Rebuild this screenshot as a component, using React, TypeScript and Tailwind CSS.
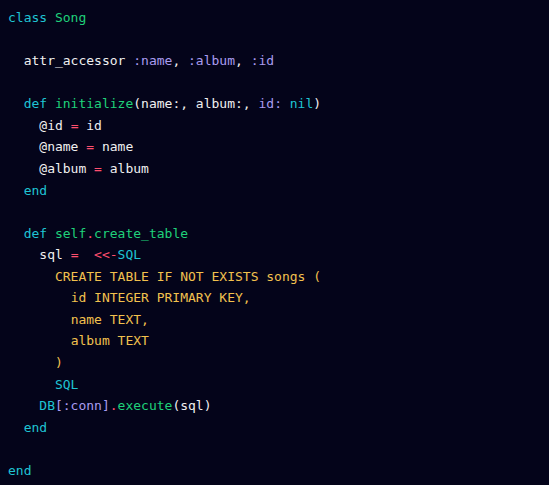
const K = "text-[#1fc4d4]"; // keywords
const N = "text-[#1fd17a]"; // names
const S = "text-[#a99cf0]"; // symbols
const O = "text-[#ff4f6e]"; // operators
const Q = "text-[#f2c14e]"; // sql string
const W = "text-[#f0f0f0]";

function C({ c, children }: { c: string; children: React.ReactNode }) {
  return <span className={c}>{children}</span>;
}

export default function App() {
  return (
    <div className="min-h-[485px] w-full bg-[#04041a]">
      <pre
        className={`m-0 px-2 pt-[7px] text-[13px] leading-[21.57px] ${W}`}
        style={{ fontFamily: '"DejaVu Sans Mono", monospace' }}
      >
        <C c={K}>class</C> <C c={N}>Song</C>
        {"\n\n  "}
        attr_accessor <C c={S}>:name</C>, <C c={S}>:album</C>, <C c={S}>:id</C>
        {"\n\n  "}
        <C c={K}>def</C> <C c={N}>initialize</C>(name:, album:, <C c={S}>id:</C> <C c={K}>nil</C>)
        {"\n    "}
        @id <C c={O}>=</C> id
        {"\n    "}
        @name <C c={O}>=</C> name
        {"\n    "}
        @album <C c={O}>=</C> album
        {"\n  "}
        <C c={K}>end</C>
        {"\n\n  "}
        <C c={K}>def</C> <C c={N}>self</C><C c={O}>.</C><C c={N}>create_table</C>
        {"\n    "}
        sql <C c={O}>=</C>  <C c={O}>{"<<-"}</C><C c={K}>SQL</C>
        {"\n      "}
        <C c={Q}>CREATE TABLE IF NOT EXISTS songs (</C>
        {"\n        "}
        <C c={Q}>id INTEGER PRIMARY KEY,</C>
        {"\n        "}
        <C c={Q}>name TEXT,</C>
        {"\n        "}
        <C c={Q}>album TEXT</C>
        {"\n      "}
        <C c={Q}>)</C>
        {"\n      "}
        <C c={K}>SQL</C>
        {"\n    "}
        <C c={K}>DB</C><C c={S}>[:conn]</C><C c={O}>.</C><C c={N}>execute</C>(sql)
        {"\n  "}
        <C c={K}>end</C>
        {"\n\n"}
        <C c={K}>end</C>
      </pre>
    </div>
  );
}
